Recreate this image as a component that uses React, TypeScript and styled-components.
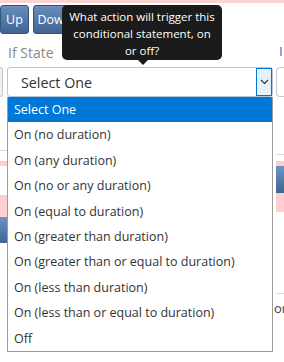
import React from "react";
import styled, { createGlobalStyle } from "styled-components";

const Global = createGlobalStyle`
  html, body { margin: 0; padding: 0; background: #fff; }
  body { font-family: "Open Sans", "Noto Sans", sans-serif; }
  * { box-sizing: border-box; }
`;

const Page = styled.div`
  position: relative;
  width: 284px;
  height: 362px;
  overflow: hidden;
  background: #fff;
`;

const TopStrip = styled.div`
  height: 3px;
  background: #fbd3d3;
`;

const Toolbar = styled.div`
  display: flex;
  gap: 4px;
  margin-top: 2px;
  height: 29px;
`;

const NavButton = styled.button<{ $w: number }>`
  width: ${(p) => p.$w}px;
  height: 29px;
  padding: 0;
  border: 1px solid #33547e;
  border-radius: 3px;
  background: linear-gradient(#6a8dbb, #3f6494);
  color: #fff;
  font-family: "Open Sans", sans-serif;
  font-size: 12.5px;
  text-align: center;
`;

const LabelRow = styled.div`
  display: flex;
  justify-content: space-between;
  padding: 9px 2px 0 8px;
  height: 33px;
`;

const Label = styled.span`
  line-height: 20px;
  font-size: 14px;
  color: #8a8a8a;
`;

const Marker = styled.span`
  width: 2px;
  height: 9px;
  margin-top: 4px;
  background: #8fa9cc;
`;

const FieldRow = styled.div`
  display: flex;
  height: 30px;
`;

const Stub = styled.div<{ $side: "left" | "right" }>`
  width: ${(p) => (p.$side === "left" ? 3 : 8)}px;
  margin-left: ${(p) => (p.$side === "left" ? 0 : 3)}px;
  margin-right: ${(p) => (p.$side === "left" ? 4 : 0)}px;
  background: #f1f1f1;
  border: 1px solid #c9c9c9;
  border-radius: ${(p) => (p.$side === "left" ? "0 3px 3px 0" : "4px 0 0 4px")};
  ${(p) => (p.$side === "left" ? "border-left: none;" : "border-right: none; background:#fff;")}
`;

const SelectWrap = styled.div`
  position: relative;
  width: 269px;
  z-index: 2;
`;

const SelectBox = styled.div`
  display: flex;
  align-items: center;
  height: 30px;
  border: 1px solid #b7c7d9;
  border-radius: 3px;
  background: #fff;
  padding-left: 13px;
  font-size: 14.3px;
  color: #333;
`;

const SelectText = styled.span`
  flex: 1;
`;

const ArrowButton = styled.div`
  width: 16px;
  height: 28px;
  border: 1px solid #0078d7;
  background: #e5f1fb;
  display: flex;
  align-items: center;
  justify-content: center;
`;

const List = styled.ul`
  position: absolute;
  top: 100%;
  left: 0;
  width: 100%;
  margin: 0;
  padding: 0;
  list-style: none;
  border: 1px solid #9c9c9c;
  border-top: none;
  background: #fff;
`;

const Option = styled.li<{ $selected?: boolean }>`
  height: 25.4px;
  line-height: 25.4px;
  padding-left: 6px;
  font-size: 12.5px;
  white-space: nowrap;
  color: ${(p) => (p.$selected ? "#fff" : "#333")};
  background: ${(p) => (p.$selected ? "#0078d7" : "transparent")};
`;

const Backdrop = styled.div`
  display: flex;
  justify-content: space-between;
`;

const Column = styled.div<{ $w: number }>`
  width: ${(p) => p.$w}px;
  display: flex;
  flex-direction: column;
`;

const Band = styled.div<{ $h: number; $kind: "gap" | "line" | "pink" | "blue" }>`
  height: ${(p) => p.$h}px;
  background: ${(p) =>
    p.$kind === "line"
      ? "#dcdcdc"
      : p.$kind === "pink"
      ? "#ffcfcf"
      : p.$kind === "blue"
      ? "linear-gradient(#6f93c2, #3f6494)"
      : "transparent"};
`;

const BgText = styled.div`
  font-size: 13px;
  line-height: 16px;
  color: #444;
  white-space: nowrap;
  margin-left: -2px;
`;

const Tooltip = styled.div`
  position: absolute;
  left: 62px;
  top: 5px;
  width: 160px;
  height: 55px;
  padding-top: 3px;
  background: #1b1b1b;
  border-radius: 5px;
  color: #fff;
  font-size: 11.5px;
  line-height: 17px;
  text-align: center;
  z-index: 3;
  &::after {
    content: "";
    position: absolute;
    left: 76px;
    bottom: -5px;
    border-left: 5px solid transparent;
    border-right: 5px solid transparent;
    border-top: 5px solid #1b1b1b;
  }
`;

const options = [
  "Select One",
  "On (no duration)",
  "On (any duration)",
  "On (no or any duration)",
  "On (equal to duration)",
  "On (greater than duration)",
  "On (greater than or equal to duration)",
  "On (less than duration)",
  "On (less than or equal to duration)",
  "Off",
];

export default function App() {
  return (
    <>
      <Global />
      <Page>
        <TopStrip />
        <Toolbar>
          <NavButton $w={29}>Up</NavButton>
          <NavButton $w={43}>Down</NavButton>
        </Toolbar>
        <LabelRow>
          <Label>If State</Label>
          <Marker />
        </LabelRow>
        <FieldRow>
          <Stub $side="left" />
          <SelectWrap>
            <SelectBox>
              <SelectText>Select One</SelectText>
              <ArrowButton>
                <svg width="9" height="6" viewBox="0 0 9 6">
                  <path d="M1 1 L4.5 4.5 L8 1" fill="none" stroke="#333" strokeWidth="1.2" />
                </svg>
              </ArrowButton>
            </SelectBox>
            <List>
              {options.map((o, i) => (
                <Option key={o} $selected={i === 0}>
                  {o}
                </Option>
              ))}
            </List>
          </SelectWrap>
          <Stub $side="right" />
        </FieldRow>
        <Backdrop>
          <Column $w={7}>
            <Band $h={53} $kind="gap" />
            <Band $h={1} $kind="line" />
            <Band $h={10} $kind="gap" />
            <Band $h={5} $kind="pink" />
            <Band $h={29} $kind="gap" />
            <Band $h={22} $kind="pink" />
            <Band $h={26} $kind="blue" />
          </Column>
          <Column $w={8}>
            <Band $h={57} $kind="gap" />
            <Band $h={1} $kind="line" />
            <Band $h={6} $kind="gap" />
            <Band $h={5} $kind="pink" />
            <Band $h={27} $kind="blue" />
            <Band $h={19} $kind="pink" />
            <Band $h={81} $kind="gap" />
            <Band $h={1} $kind="line" />
            <Band $h={6} $kind="gap" />
            <BgText>or</BgText>
          </Column>
        </Backdrop>
        <Tooltip>
          What action will trigger this
          <br />
          conditional statement, on
          <br />
          or off?
        </Tooltip>
      </Page>
    </>
  );
}
